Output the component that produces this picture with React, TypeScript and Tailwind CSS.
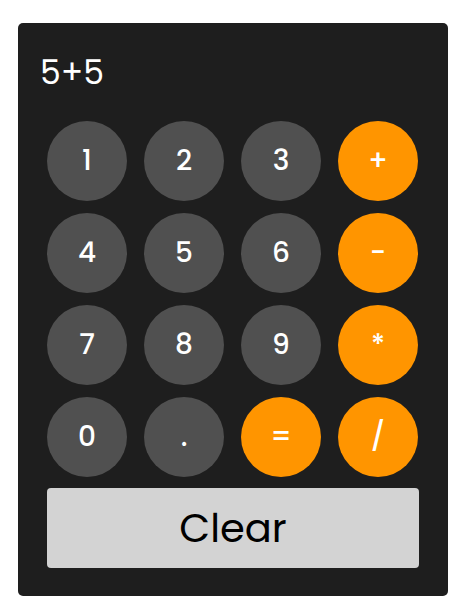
import { useState } from "react";

const keys = ["1", "2", "3", "+", "4", "5", "6", "-", "7", "8", "9", "*", "0", ".", "=", "/"];
const ops = ["+", "-", "*", "/", "="];

export default function App() {
  const [expr, setExpr] = useState("5+5");

  const press = (k: string) => {
    if (k === "=") {
      try {
        // tiny evaluator for the display string
        // eslint-disable-next-line no-new-func
        setExpr(String(Function(`return (${expr})`)()));
      } catch {
        setExpr("Error");
      }
      return;
    }
    setExpr((e) => e + k);
  };

  return (
    <div className="min-h-screen bg-white pt-[23px] pl-[18px] font-['Poppins','Lato',sans-serif]">
      <div className="w-[430px] rounded-[5px] bg-[#1e1e1e] pb-[28px]">
        {/* display */}
        <div className="h-[98px] px-[22px] pt-[30px] text-[33px] leading-[40px] text-white">{expr}</div>

        {/* keypad */}
        <div className="grid grid-cols-[repeat(4,80px)] gap-x-[17px] gap-y-[12px] px-[29px]">
          {keys.map((k) => (
            <button
              key={k}
              onClick={() => press(k)}
              className={`flex h-[80px] w-[80px] items-center justify-center rounded-full text-[28px] font-medium text-white ${
                ops.includes(k) ? "bg-[#ff9500]" : "bg-[#505050]"
              }`}
            >
              {k}
            </button>
          ))}
        </div>

        <div className="px-[29px] pt-[11px]">
          <button
            onClick={() => setExpr("")}
            className="flex h-[80px] w-full items-center justify-center rounded-[4px] bg-[#d3d3d3] text-[40px] text-black"
          >
            Clear
          </button>
        </div>
      </div>
    </div>
  );
}
